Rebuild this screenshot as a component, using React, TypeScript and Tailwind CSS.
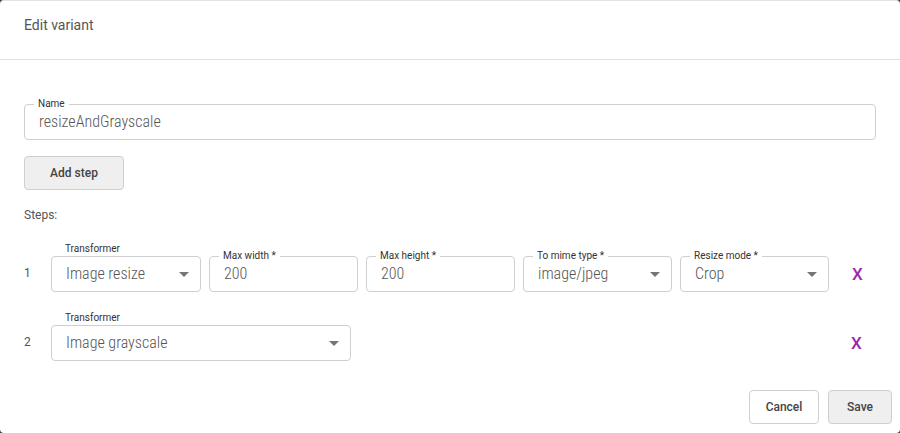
import React from 'react';

const Arrow: React.FC = () => (
  <svg width="10" height="5" viewBox="0 0 10 5" className="shrink-0">
    <path d="M0 0 L10 0 L5 5 Z" fill="#757575" />
  </svg>
);

type FieldProps = {
  label: string;
  value: string;
  width: string;
  select?: boolean;
  outerLabel?: boolean;
};

const Field: React.FC<FieldProps> = ({ label, value, width, select, outerLabel }) => (
  <div className={`flex flex-col ${width}`}>
    <div className="h-[13px] pl-[14px] text-[10px] leading-[12px] text-[#333]">
      {outerLabel ? label : ''}
    </div>
    <div className="relative flex h-[36px] items-center justify-between rounded-[4px] border border-[#cfcfcf] bg-white pl-[14px] pr-[11px]">
      {!outerLabel && (
        <span className="absolute -top-[7px] left-[9px] bg-white px-[4px] text-[10px] leading-[12px] text-[#333]">
          {label}
        </span>
      )}
      <span className="text-[16px] font-[360] font-stretch-[82%] text-[#555]">{value}</span>
      {select && <Arrow />}
    </div>
  </div>
);

const RemoveButton: React.FC = () => (
  <button className="ml-[23px] mb-[9px] text-[17px] font-medium leading-none text-[#9c27b0]">X</button>
);

export default function App() {
  return (
    <div className="bg-[#3a3a3a] font-['Roboto',sans-serif]">
      <div className="flex h-[433px] flex-col overflow-hidden rounded-[4px] border-t border-[#e4e4e4] bg-white">
        <div className="h-[59px] border-b border-[#e0e0e0] px-6 pt-[15px]">
          <h1 className="text-[14px] font-stretch-[93%] leading-[18px] text-[#555]">Edit variant</h1>
        </div>

        <div className="flex flex-1 flex-col px-6">
          <div className="relative mt-[44px] flex h-[36px] items-center rounded-[4px] border border-[#cfcfcf] pl-[14px]">
            <span className="absolute -top-[7px] left-[9px] bg-white px-[4px] text-[10px] leading-[12px] text-[#333]">
              Name
            </span>
            <span className="text-[16px] font-[360] font-stretch-[82%] text-[#555]">resizeAndGrayscale</span>
          </div>

          <button className="mt-[16px] h-[34px] w-[100px] rounded-[4px] border border-[#cfcfcf] bg-[#efefef] text-[12px] font-medium text-[#444]">
            Add step
          </button>

          <div className="mt-[17px] text-[12px] leading-[16px] text-[#555]">Steps:</div>

          <div className="mt-[20px] flex items-end">
            <span className="mb-[10px] w-[27px] text-[12px] text-[#555]">1</span>
            <div className="flex gap-[8px]">
              <Field label="Transformer" value="Image resize" width="w-[150px]" select outerLabel />
              <Field label="Max width *" value="200" width="w-[149px]" />
              <Field label="Max height *" value="200" width="w-[149px]" />
              <Field label="To mime type *" value="image/jpeg" width="w-[149px]" select />
              <Field label="Resize mode *" value="Crop" width="w-[149px]" select />
            </div>
            <RemoveButton />
          </div>

          <div className="mt-[20px] flex items-end">
            <span className="mb-[10px] w-[27px] text-[12px] text-[#555]">2</span>
            <div className="flex w-[777px]">
              <Field label="Transformer" value="Image grayscale" width="w-[300px]" select outerLabel />
            </div>
            <RemoveButton />
          </div>

          <div className="mt-[29px] flex justify-end gap-[9px]">
            <button className="h-[34px] w-[70px] rounded-[4px] border border-[#cfcfcf] bg-white text-[12px] font-medium text-[#444]">
              Cancel
            </button>
            <button className="-mr-[16px] h-[34px] w-[64px] rounded-[4px] border border-[#cfcfcf] bg-[#efefef] text-[12px] font-medium text-[#444]">
              Save
            </button>
          </div>
        </div>
      </div>
    </div>
  );
}
